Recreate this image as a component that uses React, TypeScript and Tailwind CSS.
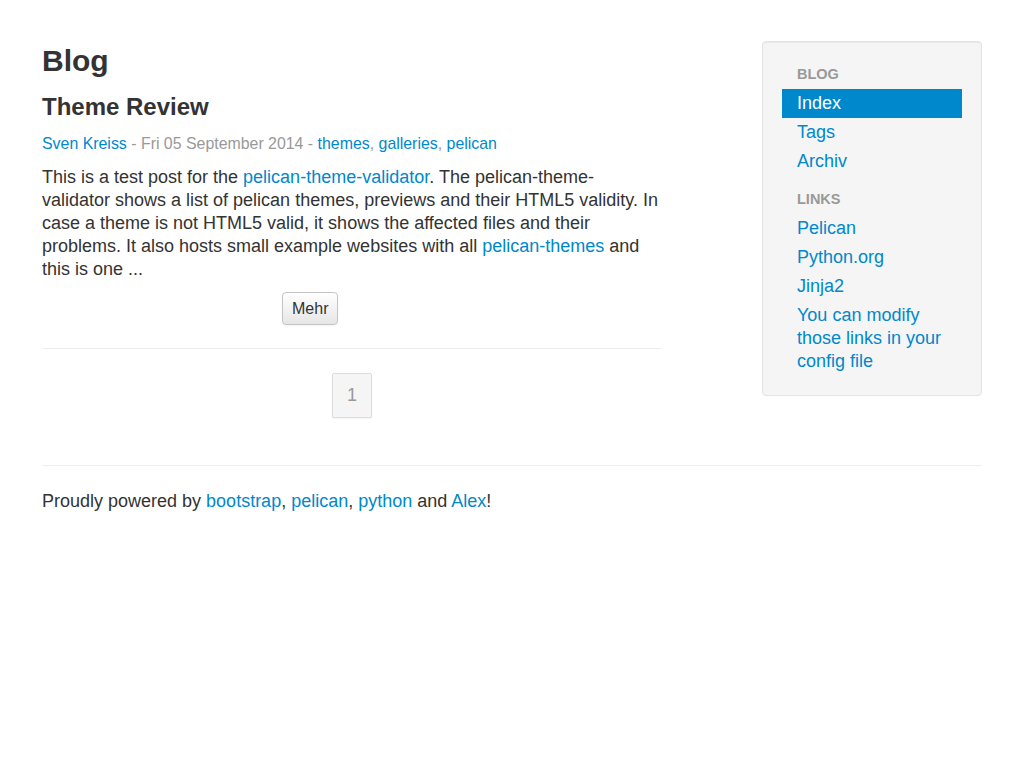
import React from "react";

const link = "text-[#0088cc] no-underline";

const NavHeader = ({ children, first }: { children: React.ReactNode; first?: boolean }) => (
    <li className={`-mx-[15px] px-[15px] py-[3px] text-[14.5px] leading-[20px] font-bold uppercase text-[#999999] ${first ? "mb-[2px]" : "mt-[10px] mb-[1.5px]"}`}>
        {children}
    </li>
);

const NavItem = ({ children, active }: { children: React.ReactNode; active?: boolean }) => (
    <li>
        <a
            href="#"
            className={`block -mx-[15px] px-[15px] py-[3px] text-[18px] leading-[23px] ${active ? "bg-[#0088cc] text-white" : "text-[#0088cc]"}`}
        >
            {children}
        </a>
    </li>
);

const App = () => {
    return (
        <div className="min-h-screen bg-white text-[#333333] font-['Liberation_Sans',Arial,sans-serif]">
            <div className="w-[940px] ml-[42px] pt-[41px]">
                <div className="flex gap-[100px]">
                    {/* Main */}
                    <div className="w-[620px]">
                        <h1 className="text-[30px] leading-[40px] font-bold">Blog</h1>
                        <h2 className="mt-[11px] text-[24px] leading-[30px] font-bold">Theme Review</h2>
                        <div className="mt-[11px] text-[15.9px] leading-[22px] text-[#999999]">
                            <a href="#" className={link}>Sven Kreiss</a> - Fri 05 September 2014 -{" "}
                            <a href="#" className={link}>themes</a>, <a href="#" className={link}>galleries</a>,{" "}
                            <a href="#" className={link}>pelican</a>
                        </div>
                        <p className="mt-[10.5px] w-[618px] text-[18px] leading-[23px]">
                            This is a test post for the <a href="#" className={link}>pelican-theme-validator</a>. The
                            pelican-theme-validator shows a list of pelican themes, previews and their HTML5 validity. In
                            case a theme is not HTML5 valid, it shows the affected files and their problems. It also hosts
                            small example websites with all <a href="#" className={link}>pelican-themes</a> and this is one ...
                        </p>
                        <div className="mt-[11.5px]">
                            <button className="ml-[240px] h-[33px] px-[9px] text-[16px] text-[#333333] border border-[#c5c5c5] rounded-[4px] bg-gradient-to-b from-white to-[#e6e6e6] shadow-[0_1px_2px_rgba(0,0,0,0.05)]">
                                Mehr
                            </button>
                        </div>
                        <hr className="mt-[23px] border-0 border-t border-[#eeeeee]" />
                        <div className="mt-[24px] flex justify-center">
                            <span className="w-[40px] h-[45px] flex items-center justify-center border border-[#dddddd] bg-[#f5f5f5] text-[18px] text-[#999999] rounded-[2px] shadow-[0_1px_2px_rgba(0,0,0,0.05)]">
                                1
                            </span>
                        </div>
                    </div>

                    {/* Sidebar */}
                    <div className="w-[220px] self-start">
                        <div className="border border-[#e3e3e3] bg-[#f5f5f5] rounded-[4px] p-[19px] shadow-[inset_0_1px_1px_rgba(0,0,0,0.05)]">
                            <ul className="px-[15px]">
                                <NavHeader first>Blog</NavHeader>
                                <NavItem active>Index</NavItem>
                                <NavItem>Tags</NavItem>
                                <NavItem>Archiv</NavItem>
                                <NavHeader>Links</NavHeader>
                                <NavItem>Pelican</NavItem>
                                <NavItem>Python.org</NavItem>
                                <NavItem>Jinja2</NavItem>
                                <NavItem>You can modify those links in your config file</NavItem>
                            </ul>
                        </div>
                    </div>
                </div>

                <hr className="mt-[47px] border-0 border-t border-[#eeeeee]" />
                <footer className="mt-[24px] text-[18px] leading-[23px]">
                    Proudly powered by <a href="#" className={link}>bootstrap</a>, <a href="#" className={link}>pelican</a>,{" "}
                    <a href="#" className={link}>python</a> and <a href="#" className={link}>Alex</a>!
                </footer>
            </div>
        </div>
    );
};

export default App;
